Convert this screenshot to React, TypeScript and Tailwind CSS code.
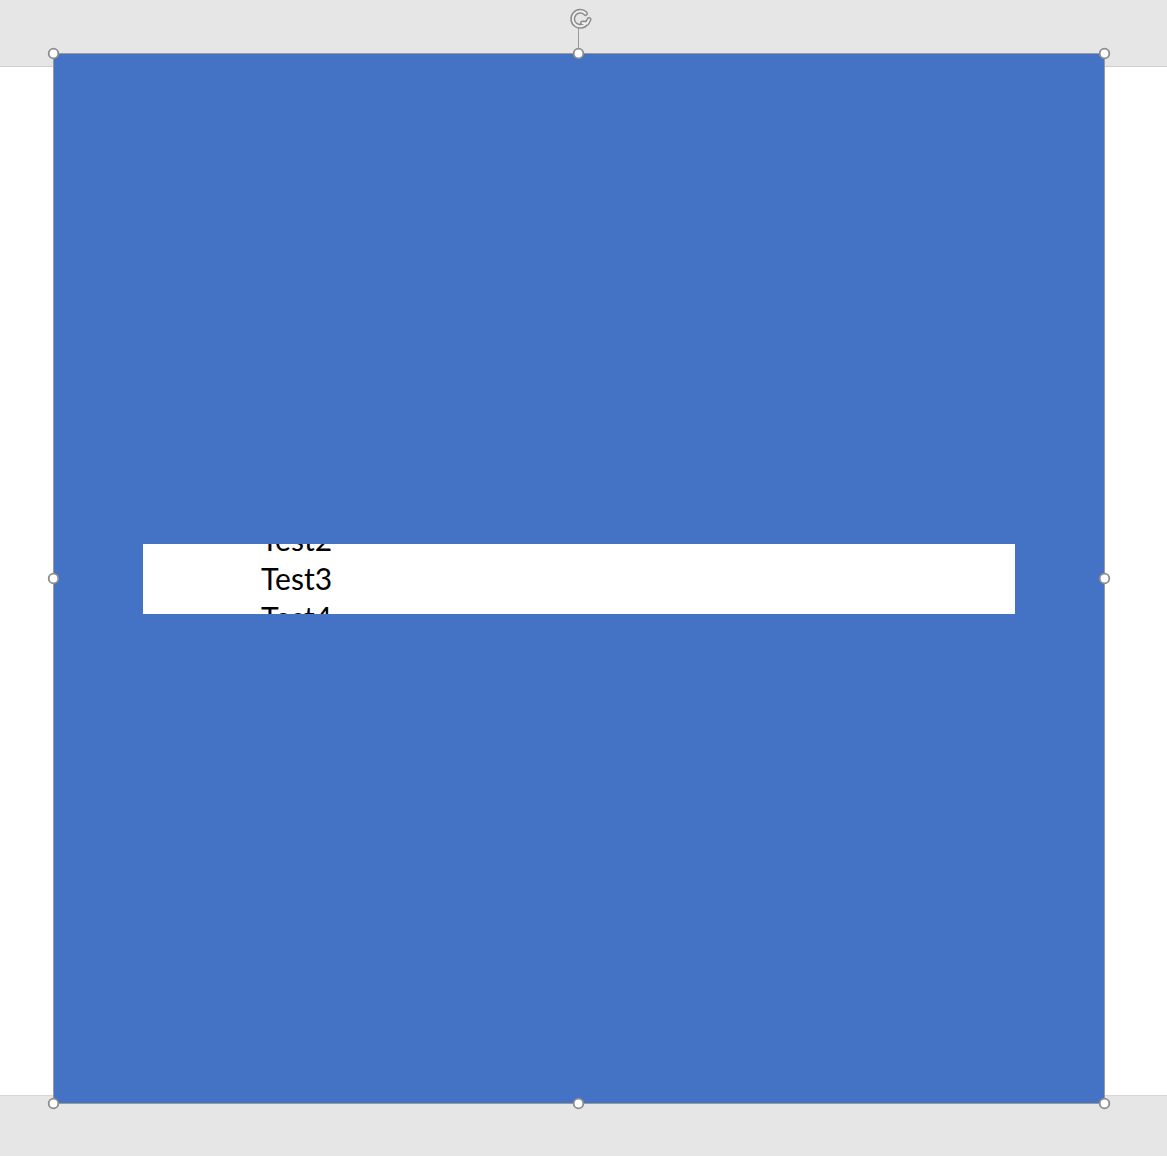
import React from "react";

const lines = ["Test1", "Test2", "Test3", "Test4", "Test5"];

// selection handles, in page coords
const handles = [
  [53, 53], [578, 53], [1104, 53],
  [53, 578], [1104, 578],
  [53, 1103], [578, 1103], [1104, 1103],
];

const Handle = ({ x, y }: { x: number; y: number }) => (
  <circle cx={x + 0.5} cy={y + 0.5} r={4.8} fill="#ffffff" stroke="#8c8c8c" strokeWidth={1.8} />
);

const rotPath = "M585.5 13.5 A7.5 7.5 0 1 0 586.5 23 M582.5 23 L587 23.5 L589 19.5";

export default function App() {
  return (
    <div className="relative w-[1167px] h-[1156px] flex flex-col overflow-hidden">
      <div className="h-[67px] bg-[#e6e6e6] border-b border-[#cfcfcf]" />
      <div className="flex-1 bg-white" />
      <div className="h-[61px] bg-[#e6e6e6] border-t border-[#d6d6d6]" />

      {/* selected shape */}
      <div className="absolute left-[53px] top-[53px] w-[1052px] h-[1051px] bg-[#4472c4] border border-[#9a9a9a] flex items-center justify-center">
        <div className="w-[872px] h-[70px] bg-white overflow-hidden flex flex-col justify-center pl-[118px]">
          {lines.map((t) => (
            <div
              key={t}
              className="shrink-0 h-[39px] leading-[39px] text-[30px] text-black"
              style={{ fontFamily: "Lato, 'Open Sans', sans-serif" }}
            >
              {t}
            </div>
          ))}
        </div>
      </div>

      <svg className="absolute inset-0 pointer-events-none" width={1167} height={1156}>
        <line x1={578.5} y1={27} x2={578.5} y2={49} stroke="#9a9a9a" strokeWidth={1} />
        {/* rotate icon */}
        <g fill="none" strokeLinecap="round" strokeLinejoin="round">
          <path d={rotPath} stroke="#8c8c8c" strokeWidth={5} />
          <path d={rotPath} stroke="#eeeeee" strokeWidth={2} />
        </g>
        {handles.map(([x, y]) => (
          <Handle key={`${x}-${y}`} x={x} y={y} />
        ))}
      </svg>
    </div>
  );
}
